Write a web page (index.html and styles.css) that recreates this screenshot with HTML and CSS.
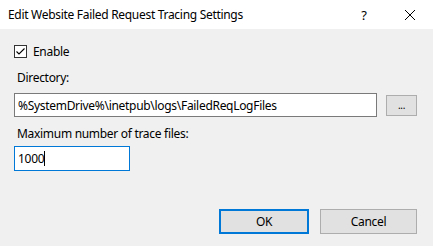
FILE: index.html
```html
<!DOCTYPE html>
<html lang="en">
<head>
    <meta charset="UTF-8">
    <title>Edit Website Failed Request Tracing Settings</title>
    <link rel="stylesheet" href="styles.css">
</head>
<body>
    <div class="dialog">
        <div class="titlebar">
            <span class="title">Edit Website Failed Request Tracing Settings</span>
            <div class="caption-btn help">?</div>
            <div class="caption-btn close">
                <svg width="12" height="12" viewBox="0 0 12 12">
                    <path d="M1 1 L11 11 M11 1 L1 11" stroke="#000" stroke-width="1"/>
                </svg>
            </div>
        </div>

        <div class="content">
            <div class="check-row">
                <div class="checkbox">
                    <svg width="11" height="11" viewBox="0 0 11 11">
                        <path d="M1.5 5.5 L4 8 L9.5 2.5" fill="none" stroke="#000" stroke-width="1.1"/>
                    </svg>
                </div>
                <span>Enable</span>
            </div>

            <div class="label dir-label">Directory:</div>
            <div class="input-row">
                <div class="textbox wide">%SystemDrive%\inetpub\logs\FailedReqLogFiles</div>
                <div class="button browse">...</div>
            </div>

            <div class="label max-label">Maximum number of trace files:</div>
            <div class="textbox small focused">1000<span class="caret"></span></div>

            <div class="actions">
                <div class="button default">OK</div>
                <div class="button cancel">Cancel</div>
            </div>
        </div>
    </div>
</body>
</html>
```

FILE: styles.css
```css
body {
    margin: 0;
    font-family: "Noto Sans", "Open Sans", sans-serif;
    font-size: 12px;
    letter-spacing: -0.3px;
    color: #000;
    background: #f0f0f0;
}
.dialog {
    width: 433px;
    height: 246px;
    background: #f0f0f0;
}
.titlebar {
    height: 29px;
    background: #fff;
    display: flex;
    align-items: center;
}
.title {
    flex: 1;
    padding-left: 8px;
}
.caption-btn {
    width: 46px;
    height: 29px;
    display: flex;
    align-items: center;
    justify-content: center;
}
.help {
    font-size: 13px;
}
.content {
    padding: 15px 16px 0 14px;
}
.check-row {
    display: flex;
    align-items: center;
    height: 15px;
}
.checkbox {
    width: 11px;
    height: 11px;
    border: 1px solid #333;
    background: #fff;
    margin-right: 6px;
    display: flex;
}
.label {
    line-height: 15px;
    padding-left: 3px;
}
.dir-label {
    margin-top: 11px;
}
.input-row {
    display: flex;
    align-items: center;
    margin-top: 8px;
}
.textbox {
    box-sizing: border-box;
    background: #fff;
    border: 1px solid #7a7a7a;
    padding-left: 3px;
    display: flex;
    align-items: center;
}
.textbox.wide {
    width: 363px;
    height: 24px;
}
.max-label {
    margin-top: 9px;
}
.textbox.small {
    width: 116px;
    height: 25px;
    margin-top: 5px;
}
.textbox.focused {
    border-color: #0078d7;
}
.caret {
    width: 1px;
    height: 15px;
    background: #000;
}
.button {
    box-sizing: border-box;
    background: #e1e1e1;
    border: 1px solid #adadad;
    display: flex;
    align-items: center;
    justify-content: center;
}
.browse {
    width: 31px;
    height: 21px;
    margin-left: 9px;
    font-size: 10px;
}
.actions {
    display: flex;
    justify-content: flex-end;
    gap: 11px;
    margin-top: 38px;
}
.actions .button {
    height: 25px;
}
.default {
    width: 90px;
    border: 2px solid #0078d7;
}
.cancel {
    width: 97px;
}
```
